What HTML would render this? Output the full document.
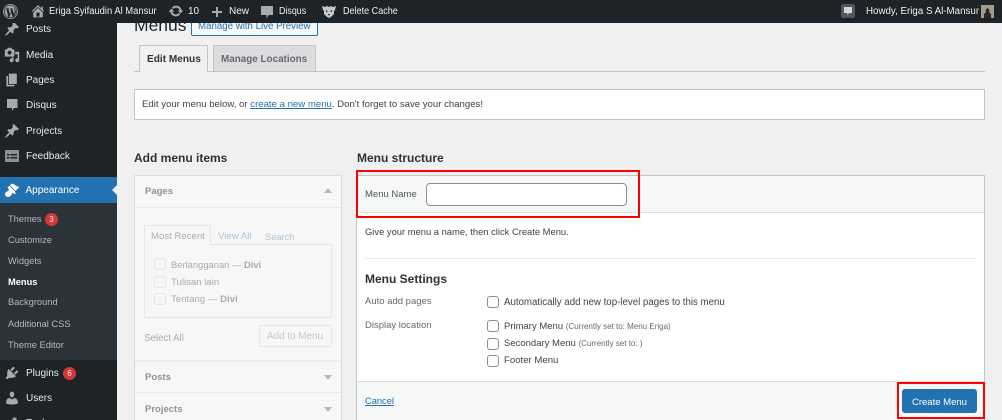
<!DOCTYPE html>
<html><head><meta charset="utf-8">
<style>
html,body{margin:0;padding:0;width:1002px;height:420px;overflow:hidden;background:#f0f0f1}
body{position:relative;font-family:"Liberation Sans",sans-serif;font-size:10px;color:#3c434a;filter:blur(.3px)}
.a{position:absolute;box-sizing:border-box}
.t{position:absolute;white-space:nowrap;line-height:14px;height:14px}
.m{color:#e8e9ea;font-size:10px}
.s{color:#b4b9be;font-size:9.3px}
.b{color:#f0f0f1;font-size:10px;transform-origin:0 50%}
.f{color:#8f9397}
.h{font-weight:bold;font-size:12px;color:#2c3338}
a{color:#2271b1;text-decoration:underline}
.c{position:absolute;box-sizing:border-box;width:12px;height:12px;border:1px solid #8c8f94;border-radius:3px;background:#fff}
.cf{position:absolute;box-sizing:border-box;width:12px;height:12px;border:1px solid #e4e5e6;border-radius:3px;background:#f7f7f7}
.bd{position:absolute;width:13px;height:13px;border-radius:50%;background:#d63638;color:#fff;font-size:8px;line-height:13px;text-align:center}
svg{position:absolute;display:block}
svg.i path{fill:#a7aaad}
</style></head><body>

<!-- sidebar -->
<div class="a" style="left:0;top:0;width:117px;height:420px;background:#1d2327"></div>
<div class="a" style="left:0;top:177px;width:117px;height:26px;background:#2271b1"></div>
<div class="a" style="left:0;top:203px;width:117px;height:157px;background:#2c3338"></div>
<div class="a" style="left:112px;top:185px;width:0;height:0;border:5px solid transparent;border-right:5px solid #f0f0f1;border-left:0"></div>

<svg class="i" style="left:4px;top:21px" width="16" height="16" viewBox="0 0 20 20"><path d="M10.44 3.02l1.82-1.82 6.36 6.35-1.83 1.82c-1.05-.68-2.48-.57-3.41.36l-.75.75c-.92.93-1.04 2.35-.35 3.41l-1.83 1.82-2.41-2.41-2.8 2.79c-.42.42-3.38 2.71-3.8 2.29s1.86-3.39 2.28-3.81l2.79-2.79L4.1 9.36l1.83-1.82c1.05.69 2.48.57 3.41-.36l.75-.75c.93-.92 1.04-2.35.35-3.41z"/></svg>
<div class="t m" style="left:26px;top:23px">Posts</div>
<svg class="i" style="left:4px;top:47px" width="16" height="16" viewBox="0 0 20 20"><path d="M13 11V4c0-.55-.45-1-1-1h-1.670L9 1H5L3.670 3H2c-.55 0-1 .45-1 1v7c0 .55.45 1 1 1h10c.55 0 1-.45 1-1zM7 4.500c1.380 0 2.500 1.120 2.500 2.500S8.380 9.500 7 9.500 4.500 8.380 4.500 7 5.620 4.500 7 4.500zM14 6h5v10.500c0 1.380-1.120 2.500-2.500 2.500S14 17.880 14 16.500s1.120-2.500 2.500-2.500c.17 0 .34.020.5.050V9h-3V6zm-4 8.050V13h2v3.500c0 1.380-1.120 2.500-2.500 2.500S7 17.880 7 16.500 8.120 14 9.500 14c.17 0 .34.020.5.050z"/></svg>
<div class="t m" style="left:26px;top:49px">Media</div>
<svg class="i" style="left:4px;top:72px" width="16" height="16" viewBox="0 0 20 20"><path d="M6 15V2h10v13H6zm-1 1h8v2H3V5h2v11z"/></svg>
<div class="t m" style="left:26px;top:74px">Pages</div>
<svg class="i" style="left:5px;top:98px" width="14" height="14" viewBox="0 0 14 14"><path d="M2 1h10.500v9H9l-2 3v-3H2z"/></svg>
<div class="t m" style="left:26px;top:99px">Disqus</div>
<svg class="i" style="left:4px;top:123px" width="16" height="16" viewBox="0 0 20 20"><path d="M10.44 3.02l1.82-1.82 6.36 6.35-1.83 1.82c-1.05-.68-2.48-.57-3.41.36l-.75.75c-.92.93-1.04 2.35-.35 3.41l-1.83 1.82-2.41-2.41-2.8 2.79c-.42.42-3.38 2.71-3.8 2.29s1.86-3.39 2.28-3.81l2.79-2.79L4.1 9.36l1.83-1.82c1.05.69 2.48.57 3.41-.36l.75-.75c.93-.92 1.04-2.35.35-3.41z"/></svg>
<div class="t m" style="left:26px;top:125px">Projects</div>
<svg style="left:5px;top:149px" width="14" height="14" viewBox="0 0 14 14"><path d="M0 1h14v12H0z" fill="#8c8f94"/><path d="M2 5h2.500v1.500H2zM5.500 5H12v1.500H5.500zM2 8h2.500v1.500H2zM5.500 8H12v1.500H5.500z" fill="#1d2327"/></svg>
<div class="t m" style="left:26px;top:150px">Feedback</div>
<svg style="left:4px;top:182px" width="16" height="16" viewBox="0 0 20 20"><path fill="#fff" d="M14.480 11.060L7.410 3.990l1.500-1.500c.5-.56 2.300-.47 3.510.32 1.210.8 1.430 1.280 2.910 2.100 1.180.64 2.450 1.260 4.450.85zm-.71.71L6.700 4.700 4.930 6.470c-.39.39-.39 1.020 0 1.410l1.060 1.060c.39.39.39 1.030 0 1.420-.6.6-1.430 1.110-2.210 1.690-.35.26-.7.530-1.010.84C1.430 13.230.5 14.500 2.180 17.820c3.320 1.680 4.590.75 5.940-.6.31-.31.58-.66.84-1.010.58-.78 1.090-1.610 1.690-2.210.39-.39 1.030-.39 1.420 0l1.060 1.060c.39.39 1.020.39 1.410 0z"/></svg>
<div class="t" style="left:25.500px;top:184px;color:#fff;font-size:10px">Appearance</div>

<div class="t s" style="left:8px;top:212px">Themes</div><div class="bd" style="left:45px;top:213px">3</div>
<div class="t s" style="left:8px;top:233px">Customize</div>
<div class="t s" style="left:8px;top:254px">Widgets</div>
<div class="t s" style="left:8px;top:275px;color:#fff;font-weight:bold">Menus</div>
<div class="t s" style="left:8px;top:295px">Background</div>
<div class="t s" style="left:8px;top:317px">Additional CSS</div>
<div class="t s" style="left:8px;top:338px">Theme Editor</div>

<svg class="i" style="left:4px;top:365px" width="16" height="16" viewBox="0 0 20 20"><path d="M13.110 4.360L9.870 7.600 8 5.730l3.240-3.240c.35-.34 1.050-.2 1.560.32.52.51.66 1.210.31 1.550zm-8 1.770l.91-1.120 9.010 9.010-1.190.84c-.71.71-2.630 1.160-3.820 1.160H6.140L4.900 17.260c-.59.59-1.540.59-2.120 0-.59-.58-.59-1.530 0-2.120l1.240-1.240v-3.880c0-1.130.4-3.190 1.090-3.890zm7.260 3.970l3.240-3.240c.34-.35 1.040-.21 1.550.31.52.51.66 1.210.31 1.550l-3.240 3.250z"/></svg>
<div class="t m" style="left:26px;top:367px">Plugins</div><div class="bd" style="left:63px;top:367px">6</div>
<svg class="i" style="left:4px;top:390px" width="16" height="16" viewBox="0 0 20 20"><path d="M10 9.250c-2.270 0-2.730-3.440-2.730-3.440C7 4.020 7.820 2 9.970 2c2.160 0 2.980 2.020 2.710 3.810 0 0-.41 3.440-2.680 3.440zm0 2.570L12.720 10c2.390 0 4.520 2.330 4.520 4.530v2.490s-3.650 1.130-7.240 1.130c-3.650 0-7.240-1.130-7.240-1.130v-2.490c0-2.250 1.940-4.480 4.470-4.480z"/></svg>
<div class="t m" style="left:26px;top:392px">Users</div>
<svg class="i" style="left:5px;top:416px" width="14" height="14" viewBox="0 0 14 14"><path d="M9 1l3 2-6 9-3-2z"/></svg>
<div class="t m" style="left:26px;top:417px">Tools</div>

<!-- heading -->
<div class="t" style="left:134px;top:14px;font-size:17.500px;line-height:22px;height:22px;color:#1d2327">Menus</div>
<div class="a" style="left:191px;top:16px;width:127px;height:20px;border:1px solid #2271b1;border-radius:2px;background:#f6f7f7"></div>
<div class="t" style="left:198px;top:20px;color:#2271b1;font-size:9.700px">Manage with Live Preview</div>

<!-- tabs -->
<div class="a" style="left:134px;top:71px;width:851px;height:1px;background:#c3c4c7"></div>
<div class="a" style="left:139px;top:45px;width:69px;height:27px;background:#f0f0f1;border:1px solid #c3c4c7;border-bottom:0"></div>
<div class="a" style="left:213px;top:45px;width:103px;height:26px;background:#dcdcde;border:1px solid #c3c4c7;border-bottom:0"></div>
<div class="t" style="left:147px;top:53px;font-weight:bold;font-size:10.100px;color:#2c3338">Edit Menus</div>
<div class="t" style="left:221px;top:53px;font-weight:bold;font-size:9.900px;color:#646970">Manage Locations</div>

<!-- notice -->
<div class="a" style="left:134px;top:89px;width:851px;height:31px;background:#fff;border:1px solid #c3c4c7"></div>
<div class="t" style="left:142px;top:98px;font-size:9.600px;color:#3c434a">Edit your menu below, or <a>create a new menu</a>. Don't forget to save your changes!</div>

<div class="t h" style="left:134px;top:151px">Add menu items</div>
<div class="t h" style="left:357px;top:151px">Menu structure</div>

<!-- left panel -->
<div class="a" style="left:134px;top:175px;width:208px;height:250px;background:#f7f7f7;border:1px solid #dcdcde"></div>
<div class="a" style="left:135px;top:207px;width:206px;height:1px;background:#e8e8e9"></div>
<div class="t f" style="left:145px;top:185px;font-weight:bold;font-size:9.500px">Pages</div>
<div class="a" style="left:324px;top:188px;border:4px solid transparent;border-bottom:5px solid #b8babc;border-top:0"></div>

<div class="a" style="left:144px;top:244px;width:188px;height:74px;border:1px solid #e6e6e7"></div>
<div class="a" style="left:144px;top:225px;width:67px;height:20px;background:#f7f7f7;border:1px solid #e6e6e7;border-bottom:0"></div>
<div class="t" style="left:151px;top:230px;font-size:9.600px;color:#a8abaf">Most Recent</div>
<div class="t" style="left:218px;top:230px;font-size:9.600px;color:#a3c4de">View All</div>
<div class="t" style="left:265px;top:230px;font-size:9.300px;color:#a3c4de">Search</div>

<div class="cf" style="left:154px;top:258px"></div><div class="t" style="left:171px;top:258px;font-size:9.400px;color:#a8abaf">Berlangganan — <b>Divi</b></div>
<div class="cf" style="left:154px;top:276px"></div><div class="t" style="left:171px;top:276px;font-size:9.600px;color:#a8abaf">Tulisan lain</div>
<div class="cf" style="left:154px;top:293px"></div><div class="t" style="left:171px;top:293px;font-size:9.600px;color:#a8abaf">Tentang — <b>Divi</b></div>

<div class="t" style="left:144px;top:332px;font-size:9.700px;color:#a8abaf">Select All</div>
<div class="a" style="left:259px;top:325px;width:73px;height:22px;border:1px solid #e6e6e7;border-radius:2px"></div>
<div class="t" style="left:267px;top:330px;font-size:9.900px;color:#c4c6c8">Add to Menu</div>

<div class="a" style="left:135px;top:360px;width:206px;height:2px;background:#ececed"></div>
<div class="t f" style="left:145px;top:371px;font-weight:bold;font-size:9.500px">Posts</div>
<div class="a" style="left:324px;top:375px;border:4px solid transparent;border-top:5px solid #b8babc;border-bottom:0"></div>
<div class="a" style="left:135px;top:392px;width:206px;height:1px;background:#e8e8e9"></div>
<div class="t f" style="left:145px;top:403px;font-weight:bold;font-size:9.500px">Projects</div>
<div class="a" style="left:324px;top:407px;border:4px solid transparent;border-top:5px solid #b8babc;border-bottom:0"></div>

<!-- menu panel -->
<div class="a" style="left:356px;top:175px;width:629px;height:250px;background:#fff;border:1px solid #c3c4c7"></div>
<div class="a" style="left:357px;top:176px;width:627px;height:37px;background:#f6f7f7;border-bottom:1px solid #dcdcde"></div>
<div class="a" style="left:357px;top:381px;width:627px;height:40px;background:#f6f7f7;border-top:1px solid #dcdcde"></div>

<div class="t" style="left:365px;top:188px;font-size:9.500px;color:#50575e">Menu Name</div>
<div class="a" style="left:426px;top:183px;width:201px;height:23px;background:#fff;border:1px solid #8c8f94;border-radius:4px"></div>

<div class="t" style="left:365px;top:225px;font-size:9.400px;color:#3c434a">Give your menu a name, then click Create Menu.</div>
<div class="a" style="left:365px;top:258px;width:611px;height:1px;background:#e8e8e9"></div>
<div class="t h" style="left:365px;top:272px">Menu Settings</div>

<div class="t" style="left:365px;top:295px;font-size:9.500px;color:#646970">Auto add pages</div>
<div class="c" style="left:487px;top:296px"></div>
<div class="t" style="left:504px;top:296px;font-size:9.700px;color:#3c434a">Automatically add new top-level pages to this menu</div>

<div class="t" style="left:365px;top:319px;font-size:9.500px;color:#646970">Display location</div>
<div class="c" style="left:487px;top:320px"></div>
<div class="t" style="left:504px;top:320px;font-size:9.500px;color:#3c434a">Primary Menu <span style="font-size:8px;color:#646970">(Currently set to: Menu Eriga)</span></div>
<div class="c" style="left:487px;top:338px"></div>
<div class="t" style="left:504px;top:337px;font-size:9.500px;color:#3c434a">Secondary Menu <span style="font-size:8px;color:#646970">(Currently set to: )</span></div>
<div class="c" style="left:487px;top:355px"></div>
<div class="t" style="left:504px;top:354px;font-size:9.600px;color:#3c434a">Footer Menu</div>

<div class="t" style="left:365px;top:394px;font-size:9.300px"><a>Cancel</a></div>

<div class="a" style="left:902px;top:389px;width:75px;height:24px;background:#2271b1;border-radius:3px"></div>
<div class="t" style="left:912px;top:396px;font-size:9.500px;color:#fff">Create Menu</div>

<!-- red boxes -->
<div class="a" style="left:356px;top:170px;width:284px;height:48px;border:2px solid #f00"></div>
<div class="a" style="left:897px;top:382px;width:88px;height:37px;border:2px solid #f00"></div>

<!-- admin bar -->
<div class="a" style="left:0;top:0;width:1002px;height:23px;background:#1d2327"></div>
<svg style="left:3px;top:3.500px" width="15" height="15" viewBox="0 0 15 15"><circle cx="7.500" cy="7.500" r="7.500" fill="#9ea3a8"/><circle cx="7.500" cy="7.500" r="6.300" fill="none" stroke="#1d2327" stroke-width=".7"/><path d="M3 4.500h3.200v.6H5.400l1.700 5 1-3-.7-2H7V4.500h3v.6h-.8l1.700 5 .8-2.600c.3-1.200-.4-1.800-.4-2.500 0-.4.200-.7.500-.7L13 7.500l-2 5.500H9.800L8 8.500 6.400 13H5.300L3.500 5.100H3z" fill="#1d2327"/></svg>
<svg class="i" style="left:30px;top:3px" width="16" height="16" viewBox="0 0 20 20"><path d="M16 8.500l1.530 1.530-1.060 1.060L10 4.620l-6.470 6.470-1.060-1.060L10 2.500l4 4v-2h2v4zm-6-2.460l6 5.990V18H4v-5.970zM12 17v-5H8v5h4z"/></svg>
<div class="t b" style="left:49px;top:5px;transform:scaleX(.94)">Eriga Syifaudin Al Mansur</div>
<svg class="i" style="left:168px;top:3px" width="16" height="16" viewBox="0 0 20 20"><path d="M10.200 3.280c3.530 0 6.430 2.610 6.920 6h2.080l-3.500 4-3.500-4h2.320c-.45-1.970-2.210-3.450-4.320-3.450-1.450 0-2.730.71-3.540 1.780L4.950 5.660C6.230 4.200 8.110 3.280 10.200 3.280zm-.4 13.440c-3.520 0-6.430-2.610-6.920-6H.8l3.500-4c1.170 1.330 2.330 2.670 3.500 4H5.480c.45 1.970 2.210 3.450 4.320 3.450 1.450 0 2.730-.71 3.540-1.780l1.710 1.950c-1.280 1.460-3.150 2.380-5.250 2.380z"/></svg>
<div class="t b" style="left:188px;top:5px">10</div>
<svg class="i" style="left:210px;top:5px" width="14" height="14" viewBox="0 0 14 14"><path d="M6 2h2v4h4v2H8v4H6V8H2V6h4z"/></svg>
<div class="t b" style="left:229px;top:5px">New</div>
<svg class="i" style="left:260px;top:5px" width="14" height="14" viewBox="0 0 14 14"><path d="M1 1h12v9H8.500l-2 3.500V10H1z"/></svg>
<div class="t b" style="left:279px;top:5px;transform:scaleX(.89)">Disqus</div>
<svg style="left:320px;top:4px" width="18" height="15" viewBox="0 0 16 15"><path d="M1 2l3 1 2-1 2 1 2-1 2 1 3-1-1 4-1 1v3l-3 3-2 1-2-1-3-3V7L2 6z" fill="#c4c6c8"/><path d="M5 6l2 1.500-2 .5zM11 6L9 7.500l2 .5zM7 10h2l-1 2z" fill="#1d2327"/></svg>
<div class="t b" style="left:343px;top:5px;transform:scaleX(.905)">Delete Cache</div>

<div class="a" style="left:841px;top:4px;width:14px;height:14px;background:#50575e;border-radius:2px"></div>
<svg style="left:843px;top:7px" width="10" height="9" viewBox="0 0 10 9"><path d="M1 0h8v6H6L4.500 8.500V6H1z" fill="#d5d6d8"/></svg>
<div class="t b" style="left:866px;top:5px;transform:scaleX(.975)">Howdy, Eriga S Al-Mansur</div>
<svg style="left:981px;top:5px" width="13" height="13" viewBox="0 0 13 13"><rect width="13" height="13" fill="#a59a90"/><path d="M3 13V9l2-2-.500-2 2-2 2 2-.500 2 2 2v4z" fill="#2b2624"/></svg>

</body></html>
